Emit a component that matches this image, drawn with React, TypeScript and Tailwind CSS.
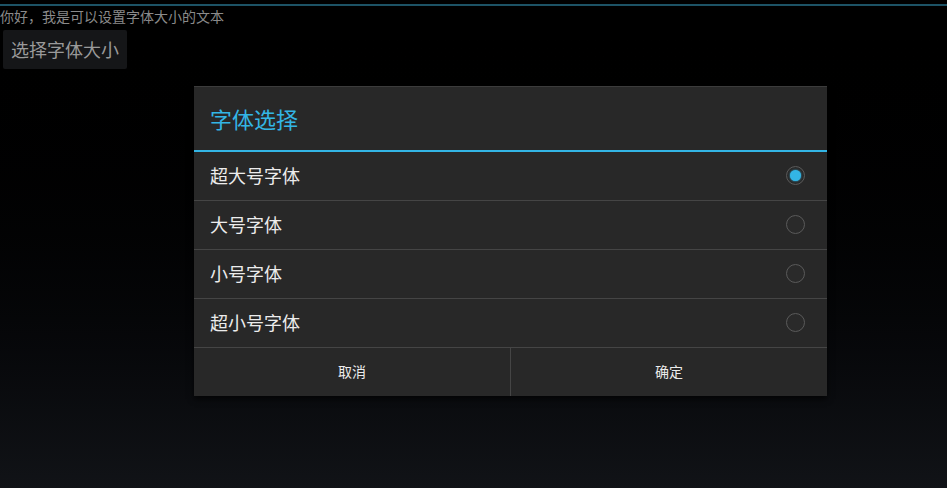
const options = ["超大号字体", "大号字体", "小号字体", "超小号字体"];

const Radio = ({ checked }: { checked: boolean }) => {
  return (
    <span className="flex h-[19px] w-[19px] items-center justify-center rounded-full border border-[#5a5a5a] bg-[#2a2a2a]">
      {checked && <span className="h-[11px] w-[11px] rounded-full bg-[#33b5e5] shadow-[0_0_2px_#33b5e5]" />}
    </span>
  );
};

export default function App() {
  return (
    <div
      className="relative h-[488px] w-[947px] overflow-hidden bg-gradient-to-b from-[#000000] to-[#111317]"
      style={{ fontFamily: '"Noto Sans CJK SC", "Noto Sans", sans-serif' }}
    >
      {/* status line */}
      <div className="mt-[4px] h-[2px] bg-[#1d5366]" />

      <div className="flex flex-col items-start">
        <p className="pt-[1px] text-[14px] leading-[18px] text-[#8a8a8a]">
          你好，我是可以设置字体大小的文本
        </p>
        <button className="ml-[3px] mt-[5px] h-[39px] w-[124px] rounded-[2px] bg-[#151618] text-[18px] text-[#9a9a9a]">
          选择字体大小
        </button>
      </div>

      {/* dialog */}
      <div className="absolute left-[194px] top-[86px] w-[633px] border-t border-[#3c3c3c] bg-[#282828] shadow-[0_3px_6px_rgba(0,0,0,0.7)]">
        <div className="flex h-[63px] items-center pb-[1px] pl-[16px] text-[22px] text-[#33b5e5]">
          字体选择
        </div>
        <div className="h-[2px] bg-[#33b5e5]" />

        {options.map((label, i) => (
          <div
            key={label}
            className="flex h-[49px] items-center justify-between border-b border-[#454545] pb-[2px] pl-[16px] pr-[22px]"
          >
            <span className="text-[18px] text-[#ececec]">{label}</span>
            <Radio checked={i === 0} />
          </div>
        ))}

        <div className="flex h-[48px]">
          <button className="flex-1 border-r border-[#454545] pb-[2px] text-[14px] text-[#ececec]">取消</button>
          <button className="flex-1 pb-[2px] text-[14px] text-[#ececec]">确定</button>
        </div>
      </div>
    </div>
  );
}
